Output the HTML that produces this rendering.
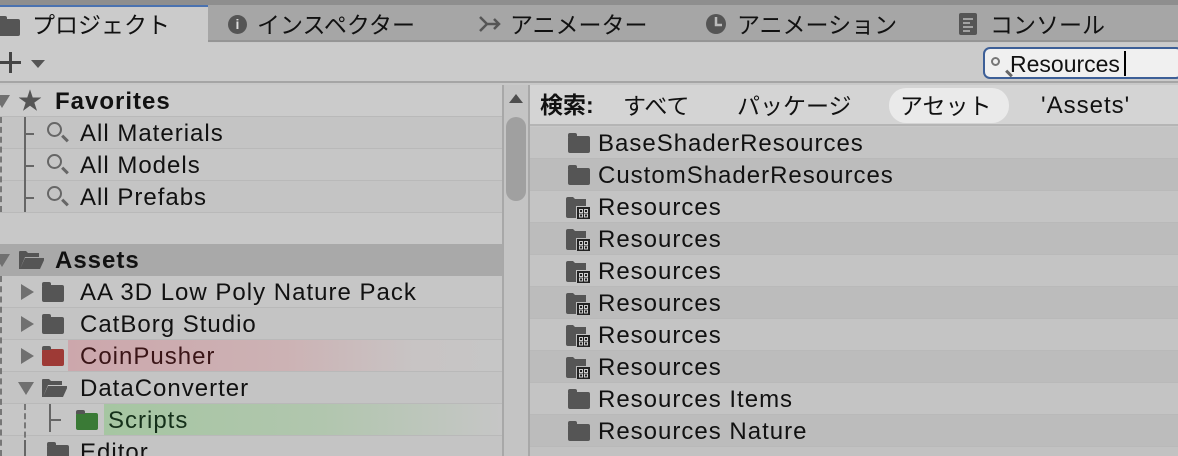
<!DOCTYPE html>
<html><head><meta charset="utf-8"><style>
*{margin:0;padding:0;box-sizing:border-box}
html,body{width:1178px;height:456px;overflow:hidden}
body{background:#c8c8c8;position:relative;font-family:"Liberation Sans","Noto Sans CJK JP",sans-serif;font-size:24px;letter-spacing:1px;color:#111}
.jp{font-size:23px;letter-spacing:0}
.a{position:absolute}
.row{position:absolute;height:32px;line-height:34px;white-space:nowrap;border-bottom:1px solid #b9b9b9}
.fold{display:inline-block;position:absolute;width:22px;height:17px;background:#555;border-radius:2px}
.fold:before{content:"";position:absolute;left:0;top:-3px;width:9px;height:4px;background:#555;border-radius:2px 2px 0 0}
.open{position:absolute;width:26px;height:20px}
.mag{position:absolute;width:15px;height:15px;border:2px solid #666;border-radius:50%}
.mag:after{content:"";position:absolute;left:12px;top:13px;width:8px;height:3px;background:#666;transform:rotate(45deg)}
.tri{position:absolute;width:0;height:0;border-top:8px solid transparent;border-bottom:8px solid transparent;border-left:13px solid #707070}
.trid{position:absolute;width:0;height:0;border-left:8px solid transparent;border-right:8px solid transparent;border-top:13px solid #707070}
.res{position:absolute;width:26px;height:24px}
</style></head><body>
<div class="a" style="left:0;top:0;width:1178px;height:5px;background:#8e8e8e"></div>
<div class="a" style="left:0;top:5px;width:1178px;height:37px;background:#a6a6a6;border-bottom:2px solid #959595"></div>
<div class="a" style="left:0;top:5px;width:208px;height:38px;background:#cbcbcb;border-top:2px solid #4a72b0"></div>
<div class="fold" style="left:-2px;top:19px;height:17px"></div>
<div class="a jp" style="left:32px;top:10px;line-height:30px">プロジェクト</div>
<div class="a" style="left:228px;top:15px;width:19px;height:19px;border-radius:50%;background:#555;color:#ddd;font-size:14px;font-weight:bold;text-align:center;line-height:19px;letter-spacing:0">i</div>
<div class="a jp" style="left:257px;top:10px;line-height:30px">インスペクター</div>
<svg class="a" style="left:478px;top:14px" width="24" height="20"><path d="M2 3 L9 10 L21 10 M9 10 L2 17 M16 5 L21 10 L16 15" stroke="#555" stroke-width="2.5" fill="none"/></svg>
<div class="a jp" style="left:510px;top:10px;line-height:30px">アニメーター</div>
<svg class="a" style="left:705px;top:13px" width="22" height="22"><circle cx="11" cy="11" r="10" fill="#555"/><path d="M11 4 V12 H17" stroke="#bbb" stroke-width="2.5" fill="none"/></svg>
<div class="a jp" style="left:737px;top:10px;line-height:30px">アニメーション</div>
<svg class="a" style="left:959px;top:13px" width="18" height="22"><rect x="0" y="0" width="18" height="22" rx="2" fill="#555"/><path d="M4 6H14M4 10H11M4 14H14M4 18H11" stroke="#bbb" stroke-width="1.5"/></svg>
<div class="a jp" style="left:990px;top:10px;line-height:30px">コンソール</div>
<div class="a" style="left:0;top:43px;width:1178px;height:40px;background:#cbcbcb;border-bottom:2px solid #a5a5a5"></div>
<div class="a" style="left:0;top:61px;width:21px;height:3px;background:#444"></div>
<div class="a" style="left:9px;top:52px;width:3px;height:21px;background:#444"></div>
<div class="a" style="left:31px;top:60px;border-left:7px solid transparent;border-right:7px solid transparent;border-top:8px solid #555"></div>
<div class="a" style="left:983px;top:47px;width:200px;height:32px;background:#f0f0f0;border:2px solid #3d5f97;border-radius:7px"></div>
<div class="mag" style="left:991px;top:57px;width:9px;height:9px;border-width:2px;border-color:#777"></div>
<div class="a" style="left:1010px;top:49px;line-height:30px;font-size:23px;letter-spacing:0">Resources</div>
<div class="a" style="left:1124px;top:51px;width:2px;height:25px;background:#000"></div>
<div class="a" style="left:0;top:85px;width:502px;height:371px;background:#c8c8c8"></div>
<div class="row" style="left:0;top:85px;width:502px;background:#cbcbcb;font-weight:bold">
 <div class="trid" style="left:-6px;top:10px"></div>
 <div class="a" style="left:18px;top:0;color:#555;font-size:24px">★</div>
 <span class="a" style="left:55px">Favorites</span></div>
<div class="row" style="left:0;top:117px;width:502px;background:#c4c4c4"><div class="mag" style="left:47px;top:5px"></div><span class="a" style="left:80px">All Materials</span></div>
<div class="row" style="left:0;top:149px;width:502px;background:#c6c6c6"><div class="mag" style="left:47px;top:5px"></div><span class="a" style="left:80px">All Models</span></div>
<div class="row" style="left:0;top:181px;width:502px;background:#c4c4c4"><div class="mag" style="left:47px;top:5px"></div><span class="a" style="left:80px">All Prefabs</span></div>
<div class="a" style="left:24px;top:117px;width:2px;height:95px;background:#666"></div>
<div class="a" style="left:26px;top:133px;width:8px;height:2px;background:#666"></div>
<div class="a" style="left:26px;top:165px;width:8px;height:2px;background:#666"></div>
<div class="a" style="left:26px;top:197px;width:8px;height:2px;background:#666"></div>
<div class="a" style="left:0;top:117px;width:0;height:95px;border-left:2px dashed #777"></div>
<div class="row" style="left:0;top:244px;width:502px;background:#a9a9a9;font-weight:bold;border:none">
 <div class="trid" style="left:-6px;top:10px"></div>
 <svg class="open" style="left:18px;top:6px" width="28" height="20"><path d="M1 2 Q1 1 2 1 H8 L10 3 H21 V7 H7 L2 19 H1Z M7 8 H27 L22 19 H2Z" fill="#555"/></svg>
 <span class="a" style="left:55px">Assets</span></div>
<div class="row" style="left:0;top:276px;width:502px;background:#c6c6c6"><div class="tri" style="left:21px;top:8px"></div><div class="fold" style="left:42px;top:9px"></div><span class="a" style="left:80px">AA 3D Low Poly Nature Pack</span></div>
<div class="row" style="left:0;top:308px;width:502px;background:#c4c4c4"><div class="tri" style="left:21px;top:8px"></div><div class="fold" style="left:42px;top:9px"></div><span class="a" style="left:80px">CatBorg Studio</span></div>
<div class="row" style="left:0;top:340px;width:502px;background:#c6c6c6"><div class="a" style="left:68px;top:0;width:434px;height:31px;background:linear-gradient(90deg,#cca7ac 0%,#ccb2b4 50%,#c8c4c4 80%,#c6c6c6 100%)"></div><div class="tri" style="left:21px;top:8px"></div><div class="fold" style="left:42px;top:9px;background:#9e3a36"></div><span class="a" style="left:80px;color:#3a1517">CoinPusher</span></div>
<div class="row" style="left:0;top:372px;width:502px;background:#c4c4c4"><div class="trid" style="left:18px;top:10px"></div><svg class="open" style="left:41px;top:6px" width="28" height="20"><path d="M1 2 Q1 1 2 1 H8 L10 3 H21 V7 H7 L2 19 H1Z M7 8 H27 L22 19 H2Z" fill="#555"/></svg><span class="a" style="left:80px">DataConverter</span></div>
<div class="row" style="left:0;top:404px;width:502px;background:#c6c6c6"><div class="a" style="left:104px;top:0;width:398px;height:31px;background:linear-gradient(90deg,#a6c6a2 0%,#b1c6ae 55%,#c6c6c6 100%)"></div><div class="fold" style="left:76px;top:9px;background:#3a7a36"></div><span class="a" style="left:108px;color:#15301a">Scripts</span></div>
<div class="row" style="left:0;top:436px;width:502px;background:#c4c4c4"><div class="fold" style="left:47px;top:9px"></div><span class="a" style="left:80px">Editor</span></div>
<div class="a" style="left:49px;top:404px;width:2px;height:28px;background:#666"></div>
<div class="a" style="left:51px;top:419px;width:10px;height:2px;background:#666"></div>
<div class="a" style="left:24px;top:404px;width:0;height:52px;border-left:2px dashed #777"></div>
<div class="a" style="left:24px;top:440px;width:2px;height:16px;background:#666"></div>
<div class="a" style="left:0;top:276px;width:0;height:180px;border-left:2px dashed #777"></div>
<div class="a" style="left:502px;top:85px;width:28px;height:371px;background:#c4c4c4;border-left:2px solid #a8a8a8;border-right:2px solid #a8a8a8"></div>
<div class="a" style="left:509px;top:94px;border-left:7px solid transparent;border-right:7px solid transparent;border-bottom:9px solid #4e4e4e"></div>
<div class="a" style="left:506px;top:117px;width:20px;height:84px;background:#a0a0a0;border-radius:10px"></div>
<div class="a" style="left:530px;top:85px;width:648px;height:41px;background:#d4d4d4;border-bottom:2px solid #b5b5b5"></div>
<div class="a jp" style="left:540px;top:90px;line-height:30px;font-weight:bold">検索:</div>
<div class="a jp" style="left:623px;top:91px;line-height:30px">すべて</div>
<div class="a jp" style="left:737px;top:91px;line-height:30px">パッケージ</div>
<div class="a" style="left:889px;top:88px;width:120px;height:35px;background:#eaeaea;border-radius:17px"></div>
<div class="a jp" style="left:900px;top:91px;line-height:30px">アセット</div>
<div class="a" style="left:1041px;top:91px;line-height:30px">'Assets'</div>
<div class="a" style="left:530px;top:127px;width:648px;height:329px;background:#c2c2c2"></div>
<div class="row" style="left:530px;top:127px;width:648px;background:#c4c4c4"><div class="fold" style="left:38px;top:9px"></div><span class="a" style="left:68px">BaseShaderResources</span></div>
<div class="row" style="left:530px;top:159px;width:648px;background:#bcbcbc"><div class="fold" style="left:38px;top:9px"></div><span class="a" style="left:68px">CustomShaderResources</span></div>
<div class="row" style="left:530px;top:191px;width:648px;background:#c4c4c4"><svg class="res" style="left:36px;top:5px" width="26" height="24"><path d="M0 3 Q0 1 2 1 H7 L9 3 H20 V10 H10 V22 H2 Q0 22 0 20Z" fill="#555"/><rect x="11" y="11" width="13" height="12" fill="#222"/><path d="M13.5 13.5h3v3h-3zM18.5 13.5h3v3h-3zM13.5 18h3v3h-3zM18.5 18h3v3h-3z" fill="none" stroke="#ccc" stroke-width="1"/></svg><span class="a" style="left:68px">Resources</span></div>
<div class="row" style="left:530px;top:223px;width:648px;background:#bcbcbc"><svg class="res" style="left:36px;top:5px" width="26" height="24"><path d="M0 3 Q0 1 2 1 H7 L9 3 H20 V10 H10 V22 H2 Q0 22 0 20Z" fill="#555"/><rect x="11" y="11" width="13" height="12" fill="#222"/><path d="M13.5 13.5h3v3h-3zM18.5 13.5h3v3h-3zM13.5 18h3v3h-3zM18.5 18h3v3h-3z" fill="none" stroke="#ccc" stroke-width="1"/></svg><span class="a" style="left:68px">Resources</span></div>
<div class="row" style="left:530px;top:255px;width:648px;background:#c4c4c4"><svg class="res" style="left:36px;top:5px" width="26" height="24"><path d="M0 3 Q0 1 2 1 H7 L9 3 H20 V10 H10 V22 H2 Q0 22 0 20Z" fill="#555"/><rect x="11" y="11" width="13" height="12" fill="#222"/><path d="M13.5 13.5h3v3h-3zM18.5 13.5h3v3h-3zM13.5 18h3v3h-3zM18.5 18h3v3h-3z" fill="none" stroke="#ccc" stroke-width="1"/></svg><span class="a" style="left:68px">Resources</span></div>
<div class="row" style="left:530px;top:287px;width:648px;background:#bcbcbc"><svg class="res" style="left:36px;top:5px" width="26" height="24"><path d="M0 3 Q0 1 2 1 H7 L9 3 H20 V10 H10 V22 H2 Q0 22 0 20Z" fill="#555"/><rect x="11" y="11" width="13" height="12" fill="#222"/><path d="M13.5 13.5h3v3h-3zM18.5 13.5h3v3h-3zM13.5 18h3v3h-3zM18.5 18h3v3h-3z" fill="none" stroke="#ccc" stroke-width="1"/></svg><span class="a" style="left:68px">Resources</span></div>
<div class="row" style="left:530px;top:319px;width:648px;background:#c4c4c4"><svg class="res" style="left:36px;top:5px" width="26" height="24"><path d="M0 3 Q0 1 2 1 H7 L9 3 H20 V10 H10 V22 H2 Q0 22 0 20Z" fill="#555"/><rect x="11" y="11" width="13" height="12" fill="#222"/><path d="M13.5 13.5h3v3h-3zM18.5 13.5h3v3h-3zM13.5 18h3v3h-3zM18.5 18h3v3h-3z" fill="none" stroke="#ccc" stroke-width="1"/></svg><span class="a" style="left:68px">Resources</span></div>
<div class="row" style="left:530px;top:351px;width:648px;background:#bcbcbc"><svg class="res" style="left:36px;top:5px" width="26" height="24"><path d="M0 3 Q0 1 2 1 H7 L9 3 H20 V10 H10 V22 H2 Q0 22 0 20Z" fill="#555"/><rect x="11" y="11" width="13" height="12" fill="#222"/><path d="M13.5 13.5h3v3h-3zM18.5 13.5h3v3h-3zM13.5 18h3v3h-3zM18.5 18h3v3h-3z" fill="none" stroke="#ccc" stroke-width="1"/></svg><span class="a" style="left:68px">Resources</span></div>
<div class="row" style="left:530px;top:383px;width:648px;background:#c4c4c4"><div class="fold" style="left:38px;top:9px"></div><span class="a" style="left:68px">Resources Items</span></div>
<div class="row" style="left:530px;top:415px;width:648px;background:#bcbcbc"><div class="fold" style="left:38px;top:9px"></div><span class="a" style="left:68px">Resources Nature</span></div>
</body></html>
